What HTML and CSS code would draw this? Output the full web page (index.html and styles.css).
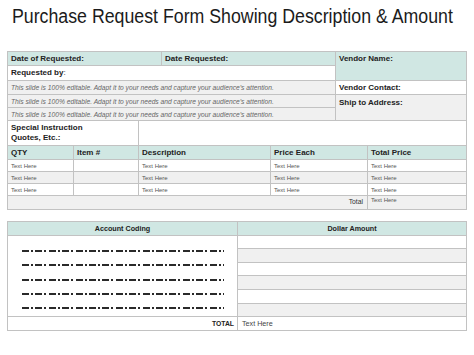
FILE: index.html
```html
<!DOCTYPE html>
<html>
<head>
<meta charset="utf-8">
<link rel="stylesheet" href="styles.css">
</head>
<body>
<h1 class="title"><span class="title-text">Purchase Request Form Showing Description &amp; Amount</span></h1>

<div class="form">
  <div class="c teal lbl mid a-date1">Date of Requested:</div>
  <div class="c teal lbl mid a-date2">Date Requested:</div>
  <div class="c teal lbl top a-vname">Vendor Name:</div>
  <div class="c lbl mid a-req">Requested by<span class="light">:</span></div>
  <div class="c gray note mid a-n1">This slide is 100% editable. Adapt it to your needs and capture your audience’s attention.</div>
  <div class="c gray note mid a-n2">This slide is 100% editable. Adapt it to your needs and capture your audience’s attention.</div>
  <div class="c gray note mid a-n3">This slide is 100% editable. Adapt it to your needs and capture your audience’s attention.</div>
  <div class="c lbl mid a-vcon">Vendor Contact:</div>
  <div class="c gray lbl top a-ship">Ship to Address:</div>
  <div class="c lbl top a-spec">Special Instruction<br>Quotes, Etc.:</div>
  <div class="c a-specv"></div>

  <div class="c teal lbl mid a-h1">QTY</div>
  <div class="c teal lbl mid a-h2">Item #</div>
  <div class="c teal lbl mid a-h3">Description</div>
  <div class="c teal lbl mid a-h4">Price Each</div>
  <div class="c teal lbl mid a-h5">Total Price</div>

  <div class="c txt mid r1 k1">Text Here</div>
  <div class="c txt mid r1 k2"></div>
  <div class="c txt mid r1 k3">Text Here</div>
  <div class="c txt mid r1 k4">Text Here</div>
  <div class="c txt mid r1 k5">Text Here</div>

  <div class="c gray txt mid r2 k1">Text Here</div>
  <div class="c gray txt mid r2 k2"></div>
  <div class="c gray txt mid r2 k3">Text Here</div>
  <div class="c gray txt mid r2 k4">Text Here</div>
  <div class="c gray txt mid r2 k5">Text Here</div>

  <div class="c txt mid r3 k1">Text Here</div>
  <div class="c txt mid r3 k2"></div>
  <div class="c txt mid r3 k3">Text Here</div>
  <div class="c txt mid r3 k4">Text Here</div>
  <div class="c txt mid r3 k5">Text Here</div>

  <div class="c gray total-label a-tot">Total</div>
  <div class="c gray txt top a-totv">Text Here</div>
</div>

<div class="coding">
  <div class="c teal head">Account Coding</div>
  <div class="c teal head">Dollar Amount</div>
  <div class="c lines">
    <div class="dash"></div>
    <div class="dash"></div>
    <div class="dash"></div>
    <div class="dash"></div>
    <div class="dash"></div>
  </div>
  <div class="c"></div>
  <div class="c gray"></div>
  <div class="c"></div>
  <div class="c gray"></div>
  <div class="c"></div>
  <div class="c gray"></div>
  <div class="c grand-label">TOTAL</div>
  <div class="c grand-value">Text Here</div>
</div>
</body>
</html>
```

FILE: styles.css
```css
html, body {
  margin: 0;
  padding: 0;
  background: #ffffff;
  font-family: "Liberation Sans", Arial, sans-serif;
  color: #222;
}

.title {
  margin: 0;
  padding: 4px 0 0 12px;
  height: 24px;
  font-size: 19.5px;
  line-height: 24px;
  font-weight: normal;
  color: #1b1b1b;
  white-space: nowrap;
}

.title-text {
  display: inline-block;
  transform: scaleX(0.91);
  transform-origin: left center;
}

.form {
  margin: 23px 0 0 7px;
  width: 458px;
  display: grid;
  grid-template-columns: 65px 64px 22px 108px 64px 31px 98px;
  grid-template-rows: 13px 14px 13px 12px 12px 24px 13px 11px 11px 11px 13px;
  gap: 1px;
  padding: 1px;
  background: #c2c2c2;
}

.c {
  background: #ffffff;
  display: flex;
  overflow: hidden;
  white-space: nowrap;
  min-width: 0;
}

.teal { background: #d0e7e3; }
.gray { background: #f0f0f0; }

.mid { align-items: center; }
.top { align-items: flex-start; padding-top: 2px; }

.lbl {
  font-size: 8px;
  font-weight: bold;
  line-height: 10px;
  padding-left: 3px;
  color: #222;
}

.light { font-weight: normal; }

.note {
  font-size: 6.7px;
  font-style: italic;
  color: #666;
  padding-left: 3px;
}

.txt {
  font-size: 6px;
  color: #555;
  padding-left: 3px;
}

.a-date1 { grid-column: 1 / 4; grid-row: 1; }
.a-date2 { grid-column: 4 / 6; grid-row: 1; }
.a-vname { grid-column: 6 / 8; grid-row: 1 / 3; }
.a-req   { grid-column: 1 / 6; grid-row: 2; }
.a-n1    { grid-column: 1 / 6; grid-row: 3; }
.a-n2    { grid-column: 1 / 6; grid-row: 4; }
.a-n3    { grid-column: 1 / 6; grid-row: 5; }
.a-vcon  { grid-column: 6 / 8; grid-row: 3; }
.a-ship  { grid-column: 6 / 8; grid-row: 4 / 6; padding-top: 3px; }
.a-spec  { grid-column: 1 / 3; grid-row: 6; white-space: normal; padding-top: 2px; }
.a-specv { grid-column: 3 / 8; grid-row: 6; }

.a-h1 { grid-column: 1; grid-row: 7; }
.a-h2 { grid-column: 2; grid-row: 7; }
.a-h3 { grid-column: 3 / 5; grid-row: 7; }
.a-h4 { grid-column: 5 / 7; grid-row: 7; }
.a-h5 { grid-column: 7; grid-row: 7; }

.r1 { grid-row: 8; }
.r2 { grid-row: 9; }
.r3 { grid-row: 10; }
.k1 { grid-column: 1; }
.k2 { grid-column: 2; }
.k3 { grid-column: 3 / 5; }
.k4 { grid-column: 5 / 7; }
.k5 { grid-column: 7; }

.a-tot {
  grid-column: 1 / 7;
  grid-row: 11;
  justify-content: flex-end;
  align-items: flex-start;
  padding: 2px 4px 0 0;
  font-size: 6.8px;
  line-height: 8px;
  color: #333;
}

.a-totv { grid-column: 7; grid-row: 11; padding-top: 1px; }

.coding {
  margin: 11px 0 0 7px;
  width: 458px;
  display: grid;
  grid-template-columns: 229px 228px;
  grid-template-rows: 13px 12px 13px 12px 13px 13px 12px 13px;
  gap: 1px;
  padding: 1px;
  background: #c2c2c2;
}

.head {
  justify-content: center;
  align-items: center;
  font-size: 7.2px;
  font-weight: bold;
  color: #222;
}

.lines {
  grid-column: 1;
  grid-row: 2 / 8;
  flex-direction: column;
  padding: 14px 12px 0 14px;
  gap: 12.3px;
}

.dash {
  height: 2px;
  width: 202px;
  flex: none;
  background: repeating-linear-gradient(to right,
    #2a2a2a 0, #2a2a2a 7px,
    transparent 7px, transparent 9px,
    #2a2a2a 9px, #2a2a2a 11px,
    transparent 11px, transparent 13.4px);
}

.grand-label {
  justify-content: flex-end;
  align-items: center;
  padding-right: 3px;
  font-size: 6.8px;
  font-weight: bold;
  color: #222;
}

.grand-value {
  align-items: center;
  padding-left: 4px;
  font-size: 7.2px;
  color: #444;
}
```
